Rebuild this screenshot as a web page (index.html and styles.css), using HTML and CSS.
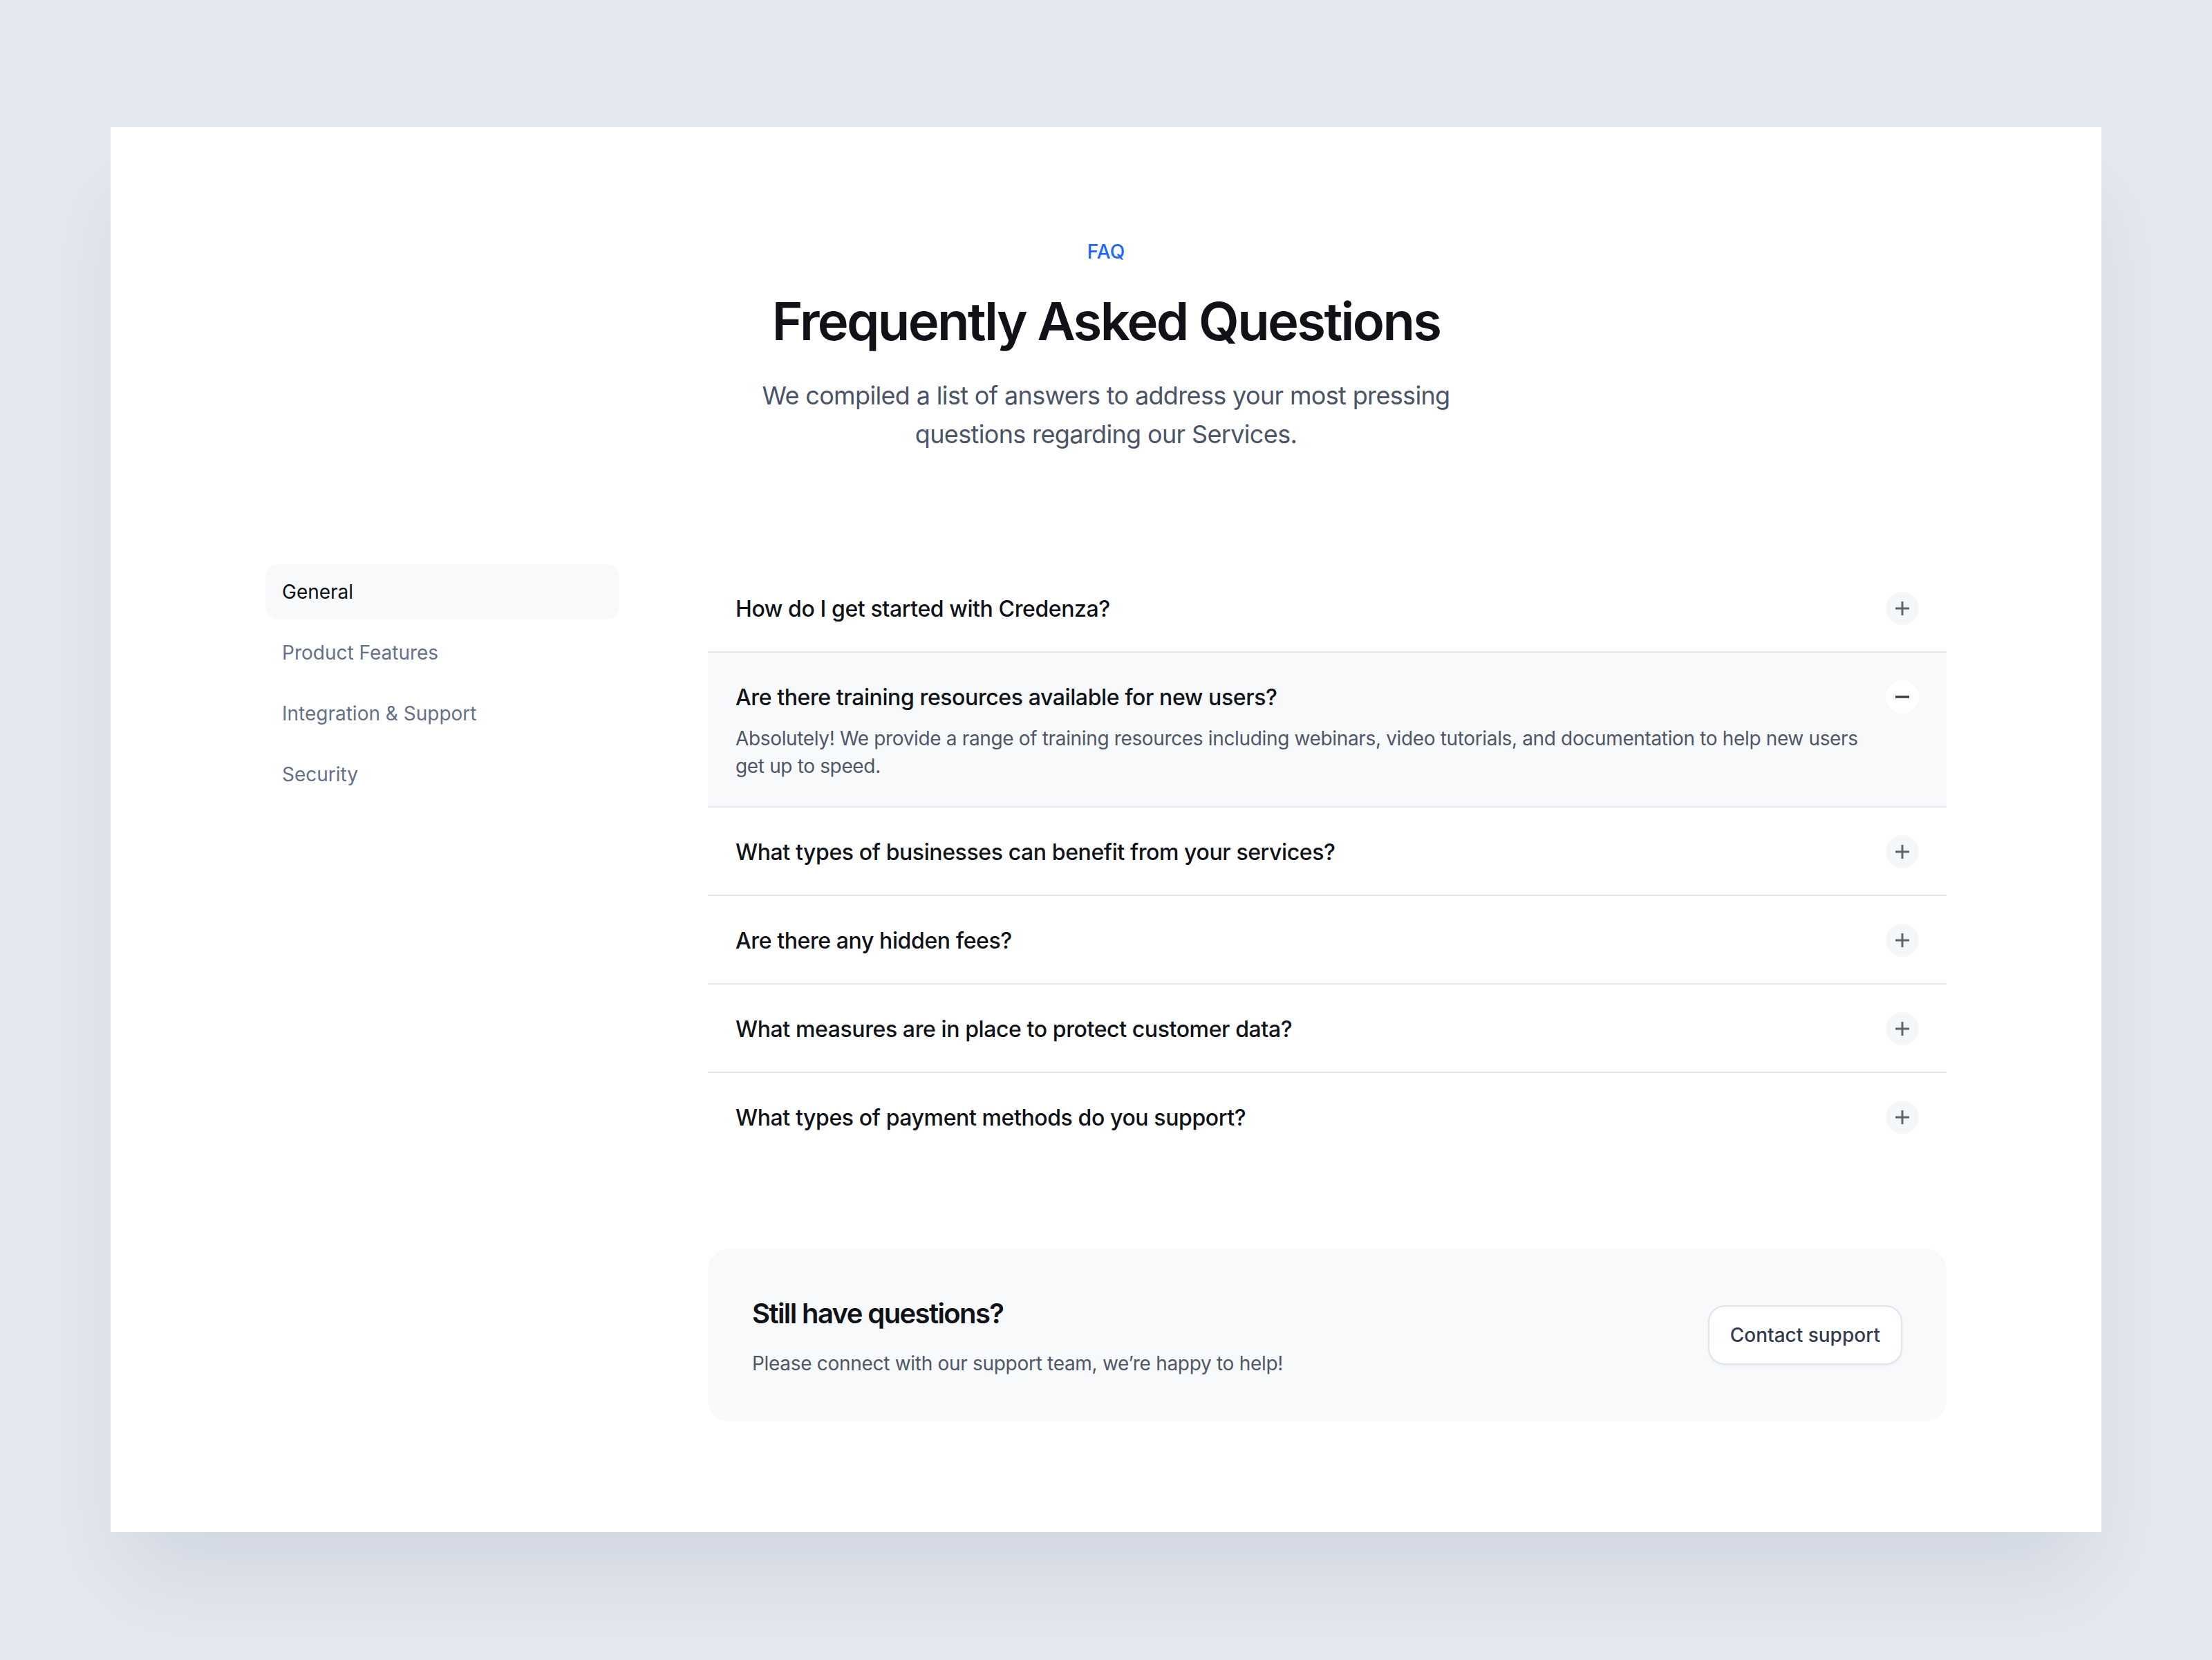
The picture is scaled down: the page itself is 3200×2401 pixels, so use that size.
FILE: index.html
```html
<!DOCTYPE html>
<html lang="en">
<head>
<meta charset="utf-8">
<title>FAQ</title>
<link rel="stylesheet" href="styles.css">
</head>
<body>
<main class="card">
  <header class="head">
    <div class="eyebrow">FAQ</div>
    <h1 class="title">Frequently Asked Questions</h1>
    <p class="lead">We compiled a list of answers to address your most pressing questions regarding our Services.</p>
  </header>
  <div class="layout">
    <nav class="side">
      <a class="side-item active">General</a>
      <a class="side-item">Product Features</a>
      <a class="side-item">Integration &amp; Support</a>
      <a class="side-item">Security</a>
    </nav>
    <section class="content">
      <div class="faq">
        <div class="item">
          <div class="q"><span>How do I get started with Credenza?</span>
            <span class="ic"><svg viewBox="0 0 48 48" width="48" height="48"><path d="M24 14v20M14 24h20" class="plus"/></svg></span></div>
        </div>
        <div class="item open">
          <div class="q"><span>Are there training resources available for new users?</span>
            <span class="ic"><svg viewBox="0 0 48 48" width="48" height="48"><path d="M14 24h20" class="minus"/></svg></span></div>
          <p class="a">Absolutely! We provide a range of training resources including webinars, video tutorials, and documentation to help new users get up to speed.</p>
        </div>
        <div class="item">
          <div class="q"><span>What types of businesses can benefit from your services?</span>
            <span class="ic"><svg viewBox="0 0 48 48" width="48" height="48"><path d="M24 14v20M14 24h20" class="plus"/></svg></span></div>
        </div>
        <div class="item">
          <div class="q"><span>Are there any hidden fees?</span>
            <span class="ic"><svg viewBox="0 0 48 48" width="48" height="48"><path d="M24 14v20M14 24h20" class="plus"/></svg></span></div>
        </div>
        <div class="item">
          <div class="q"><span>What measures are in place to protect customer data?</span>
            <span class="ic"><svg viewBox="0 0 48 48" width="48" height="48"><path d="M24 14v20M14 24h20" class="plus"/></svg></span></div>
        </div>
        <div class="item">
          <div class="q"><span>What types of payment methods do you support?</span>
            <span class="ic"><svg viewBox="0 0 48 48" width="48" height="48"><path d="M24 14v20M14 24h20" class="plus"/></svg></span></div>
        </div>
      </div>
      <div class="support">
        <div class="support-text">
          <h2 class="support-title">Still have questions?</h2>
          <p class="support-sub">Please connect with our support team, we’re happy to help!</p>
        </div>
        <button class="btn">Contact support</button>
      </div>
    </section>
  </div>
</main>
</body>
</html>
```
FILE: styles.css
```css
* { box-sizing: border-box; }
html, body { margin: 0; padding: 0; }
body {
  background: #e4e8f0;
  font-family: Inter, "Noto Sans", sans-serif;
  color: #111827;
  padding: 184px 160px 185px;
}
.card {
  width: 2880px;
  background: #ffffff;
  padding: 160px 224px 160px;
  box-shadow: 0 80px 120px -20px rgba(40, 55, 90, 0.10);
}
.head {
  display: flex;
  flex-direction: column;
  align-items: center;
  text-align: center;
}
.eyebrow {
  font-size: 28px;
  line-height: 40px;
  color: #1a66ff;
  font-weight: 500;
}
.title {
  margin: 32px 0 0;
  font-size: 76px;
  line-height: 96px;
  font-weight: 600;
  letter-spacing: -0.035em;
  color: #111217;
}
.lead {
  margin: 32px 0 0;
  max-width: 1040px;
  font-size: 36px;
  line-height: 56px;
  letter-spacing: -0.65px;
  color: #4b5467;
}
.layout {
  display: flex;
  gap: 128px;
  margin-top: 160px;
}
.side {
  width: 512px;
  flex: none;
  display: flex;
  flex-direction: column;
  gap: 8px;
}
.side-item {
  display: flex;
  align-items: center;
  height: 80px;
  padding: 0 24px;
  border-radius: 20px;
  font-size: 28px;
  color: #64708a;
}
.side-item.active {
  background: #f8f9fb;
  color: #0d1016;
}
.content {
  width: 1792px;
  flex: none;
}
.faq { display: flex; flex-direction: column; }
.item {
  padding: 40px 40px 38px;
  border-bottom: 2px solid #e5e8ee;
}
.item:last-child { border-bottom: none; }
.item.open { background: #f8f9fb; }
.q {
  display: flex;
  justify-content: space-between;
  align-items: center;
  height: 48px;
  font-size: 32px;
  font-weight: 500;
  letter-spacing: -0.4px;
  color: #0f1218;
}
.ic {
  width: 48px;
  height: 48px;
  border-radius: 50%;
  background: #f5f6f8;
  display: flex;
  flex: none;
}
.open .ic { background: #ffffff; }
.plus { stroke: #5c6478; stroke-width: 3; fill: none; }
.minus { stroke: #363d4f; stroke-width: 3.4; fill: none; }
.a {
  margin: 16px 0 0;
  padding-right: 64px;
  font-size: 28px;
  line-height: 40px;
  letter-spacing: -0.35px;
  color: #4e5668;
}
.support {
  margin-top: 128px;
  background: #f8f9fb;
  border-radius: 32px;
  padding: 64px;
  display: flex;
  align-items: center;
  justify-content: space-between;
}
.support-title {
  margin: 0;
  font-size: 40px;
  line-height: 60px;
  font-weight: 600;
  letter-spacing: -0.04em;
  color: #111217;
}
.support-sub {
  margin: 22px 0 0;
  font-size: 28px;
  line-height: 40px;
  letter-spacing: -0.3px;
  color: #4e5668;
}
.btn {
  font-family: Inter, "Noto Sans", sans-serif;
  height: 86px;
  padding: 0 30px;
  background: #ffffff;
  border: 2px solid #dfe3ea;
  border-radius: 24px;
  font-size: 28px;
  font-weight: 500;
  color: #333b4d;
  box-shadow: 0 2px 4px rgba(15, 23, 42, 0.04);
}
```
